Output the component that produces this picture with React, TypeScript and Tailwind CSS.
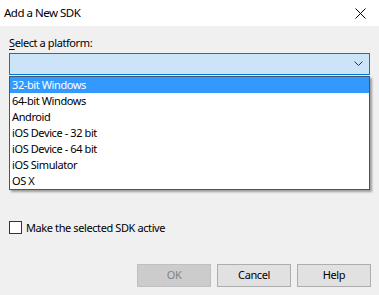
import React from "react";

const items = [
  "32-bit Windows",
  "64-bit Windows",
  "Android",
  "iOS Device - 32 bit",
  "iOS Device - 64 bit",
  "iOS Simulator",
  "OS X",
];

export default function App() {
  return (
    <div
      className="w-[379px] h-[295px] bg-[#f0f0f0] flex flex-col overflow-hidden text-[11px] tracking-[-0.4px] text-black"
      style={{ fontFamily: '"Noto Sans", "Open Sans", sans-serif' }}
    >
      <div className="h-[26px] bg-white flex items-center justify-between pl-[4px] pr-[13px] shrink-0">
        <span className="text-[11.5px] leading-none tracking-[-0.5px]">Add a New SDK</span>
        <svg width="11" height="11" viewBox="0 0 11 11">
          <path d="M0.5 0.5 L10.5 10.5 M10.5 0.5 L0.5 10.5" stroke="#000" strokeWidth="1" />
        </svg>
      </div>
      <div className="flex flex-col px-[9px]">
        <div className="mt-[9px] h-[15px] leading-[15px]">
          <span className="underline underline-offset-2">S</span>elect a platform:
        </div>
        <div className="relative mt-[3px]">
          <div className="h-[22px] border border-[#0078d7] bg-[#cce4f7] flex items-center justify-end pr-[6px]">
            <svg width="9" height="6" viewBox="0 0 9 6">
              <path d="M0.5 0.5 L4.5 4.5 L8.5 0.5" stroke="#333" strokeWidth="1" fill="none" />
            </svg>
          </div>
          <div className="absolute left-0 right-0 top-[23px] z-10 bg-white border border-[#3f5770] shadow-[2px_2px_2px_rgba(0,0,0,0.35)]">
            {items.map((it, i) => (
              <div
                key={it}
                className={
                  i === 0
                    ? "h-[16px] leading-[16px] pl-[2px] bg-[#3399ff] text-white"
                    : "h-[16px] leading-[16px] pl-[2px]"
                }
              >
                {it}
              </div>
            ))}
          </div>
        </div>
        <div className="mt-[146px] flex items-center h-[13px]">
          <div className="w-[13px] h-[13px] border border-[#333333] bg-white shrink-0" />
          <span className="ml-[4px] leading-none">Make the selected SDK active</span>
        </div>
        <div className="mt-[30px] flex justify-end gap-[6px] mr-[-1px]">
          <div className="w-[74px] h-[23px] bg-[#cccccc] border border-[#bfbfbf] text-[#838383] flex items-center justify-center">
            OK
          </div>
          <div className="w-[74px] h-[23px] bg-[#e1e1e1] border border-[#adadad] flex items-center justify-center">
            Cancel
          </div>
          <div className="w-[74px] h-[23px] bg-[#e1e1e1] border border-[#adadad] flex items-center justify-center">
            Help
          </div>
        </div>
      </div>
    </div>
  );
}
